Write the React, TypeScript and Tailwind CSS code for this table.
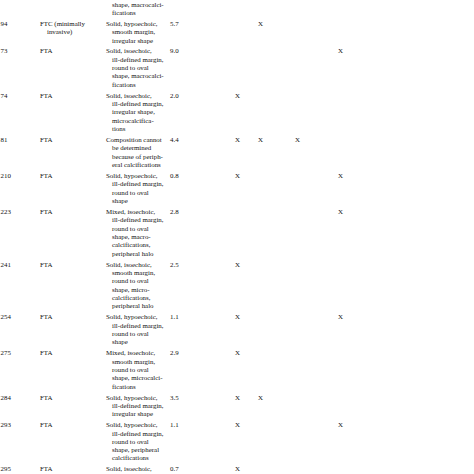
const rows: {
  id: string;
  type: string[];
  features: string[];
  size: string;
  marks: boolean[];
}[] = [
  { id: "", type: [], features: ["", "shape, macrocalci-", "fications"], size: "", marks: [false, false, false, false] },
  { id: "94", type: ["FTC (minimally", "invasive)"], features: ["Solid, hypoechoic,", "smooth margin,", "irregular shape"], size: "5.7", marks: [false, true, false, false] },
  { id: "73", type: ["FTA"], features: ["Solid, isoechoic,", "ill-defined margin,", "round to oval", "shape, macrocalci-", "fications"], size: "9.0", marks: [false, false, false, true] },
  { id: "74", type: ["FTA"], features: ["Solid, isoechoic,", "ill-defined margin,", "irregular shape,", "microcalcifica-", "tions"], size: "2.0", marks: [true, false, false, false] },
  { id: "81", type: ["FTA"], features: ["Composition cannot", "be determined", "because of periph-", "eral calcifications"], size: "4.4", marks: [true, true, true, false] },
  { id: "210", type: ["FTA"], features: ["Solid, hypoechoic,", "ill-defined margin,", "round to oval", "shape"], size: "0.8", marks: [true, false, false, true] },
  { id: "223", type: ["FTA"], features: ["Mixed, isoechoic,", "ill-defined margin,", "round to oval", "shape, macro-", "calcifications,", "peripheral halo"], size: "2.8", marks: [false, false, false, true] },
  { id: "241", type: ["FTA"], features: ["Solid, isoechoic,", "smooth margin,", "round to oval", "shape, micro-", "calcifications,", "peripheral halo"], size: "2.5", marks: [true, false, false, false] },
  { id: "254", type: ["FTA"], features: ["Solid, hypoechoic,", "ill-defined margin,", "round to oval", "shape"], size: "1.1", marks: [true, false, false, true] },
  { id: "275", type: ["FTA"], features: ["Mixed, isoechoic,", "smooth margin,", "round to oval", "shape, microcalci-", "fications"], size: "2.9", marks: [true, false, false, false] },
  { id: "284", type: ["FTA"], features: ["Solid, hypoechoic,", "ill-defined margin,", "irregular shape"], size: "3.5", marks: [true, true, false, false] },
  { id: "293", type: ["FTA"], features: ["Solid, hypoechoic,", "ill-defined margin,", "round to oval", "shape, peripheral", "calcifications"], size: "1.1", marks: [true, false, false, true] },
  { id: "295", type: ["FTA"], features: ["Solid, isoechoic,"], size: "0.7", marks: [true, false, false, false] },
];

export default function App() {
  return (
    <div
      className="h-[474px] w-[474px] overflow-hidden bg-white text-[6.9px] leading-[8.33px] text-[#111]"
      style={{ fontFamily: '"Liberation Serif", "Times New Roman", serif' }}
    >
      {/* first row is cut by the top edge */}
      <div className="-mt-[7.8px] flex flex-col gap-[2.67px]">
        {rows.map((r, i) => (
          <div
            key={i}
            className="grid grid-cols-[40px_66px_64px_65px_23px_37px_43px_1fr] whitespace-nowrap"
          >
            <div className="pl-[0.5px]">{r.id}</div>
            <div>
              {r.type.map((t, j) => (
                <div key={j} className={j > 0 ? "pl-[7px]" : ""}>
                  {t}
                </div>
              ))}
            </div>
            <div>
              {r.features.map((f, j) => (
                <div key={j} className={j > 0 ? "pl-[6px]" : ""}>
                  {f || "\u00a0"}
                </div>
              ))}
            </div>
            <div>{r.size}</div>
            {r.marks.map((m, j) => (
              <div key={j}>{m ? "X" : ""}</div>
            ))}
          </div>
        ))}
      </div>
    </div>
  );
}
